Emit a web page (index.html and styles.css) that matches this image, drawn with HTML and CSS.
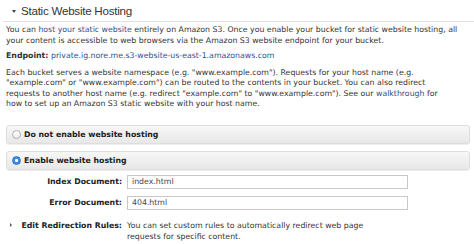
FILE: index.html
```html
<!DOCTYPE html>
<html>
<head>
<meta charset="utf-8">
<link rel="stylesheet" href="styles.css">
</head>
<body>
<div class="panel">
  <div class="header">
    <span class="caret-down"></span>
    <span class="title">Static Website Hosting</span>
  </div>
  <div class="content">
    <p class="para">You can <a class="link" href="#">host your static website</a> entirely on Amazon S3. Once you enable your bucket for static website hosting, all your content is accessible to web browsers via the Amazon S3 website endpoint for your bucket.</p>
    <p class="endpoint"><b>Endpoint:</b> <a class="link" href="#">private.ig.nore.me.s3-website-us-east-1.amazonaws.com</a></p>
    <p class="para">Each bucket serves a website namespace (e.g. "www.example.com"). Requests for your host name (e.g.<br>"example.com" or "www.example.com") can be routed to the contents in your bucket. You can also redirect<br>requests to another host name (e.g. redirect "example.com" to "www.example.com"). See our <a class="link" href="#">walkthrough</a> for<br>how to set up an Amazon S3 static website with your host name.</p>

    <div class="option first">
      <span class="radio"></span>
      <span class="opt-label">Do not enable website hosting</span>
    </div>
    <div class="option">
      <span class="radio checked"></span>
      <span class="opt-label">Enable website hosting</span>
    </div>

    <div class="form">
      <div class="row">
        <span class="label">Index Document:</span>
        <span class="input">index.html</span>
      </div>
      <div class="row">
        <span class="label">Error Document:</span>
        <span class="input">404.html</span>
      </div>
      <div class="row rules">
        <span class="label"><span class="caret-right"></span>Edit Redirection Rules:</span>
        <span class="desc">You can set custom rules to automatically redirect web page requests for specific content.</span>
      </div>
    </div>
  </div>
</div>
</body>
</html>
```
FILE: styles.css
```css
html, body {
  margin: 0;
  padding: 0;
  background: #ffffff;
}
body {
  font-family: "DejaVu Sans", Verdana, sans-serif;
  font-size: 7.8px;
  color: #333;
  width: 474px;
  height: 244px;
  overflow: hidden;
}
.panel {
  padding: 0 4px 0 6px;
}
.header {
  display: flex;
  align-items: center;
  height: 21px;
  border-bottom: 1px solid #e2e2e2;
  margin-left: -3px;
  margin-right: -4px;
  padding-left: 3px;
}
.caret-down {
  width: 0;
  height: 0;
  border-left: 2.5px solid transparent;
  border-right: 2.5px solid transparent;
  border-top: 3px solid #444;
  margin-left: 6px;
  margin-right: 5px;
  margin-top: 1px;
}
.title {
  font-family: "Liberation Sans", Arial, sans-serif;
  font-size: 11.6px;
  letter-spacing: -0.25px;
  color: #333;
}
.content {
  padding-top: 3px;
}
.para {
  margin: 0 0 5px 0;
  line-height: 10.5px;
}
.endpoint {
  margin: 0 0 6px 0;
  line-height: 10.5px;
}
.link {
  color: #2c4f8c;
  text-decoration: none;
}
.option {
  display: flex;
  align-items: center;
  height: 17px;
  margin-top: 7px;
  border: 1px solid #dedede;
  border-radius: 3px;
  background: linear-gradient(#f7f7f7, #e8e8e8);
  box-shadow: 0 1px 0 #eeeeee;
}
.option.first {
  margin-top: 15px;
}
.radio {
  width: 9px;
  height: 9px;
  border-radius: 50%;
  border: 1px solid #b0b0b0;
  background: linear-gradient(#ffffff, #ececec);
  margin-left: 5px;
  margin-right: 3px;
  box-sizing: border-box;
}
.radio.checked {
  border: 1px solid #2f78c8;
  background: radial-gradient(circle, #ffffff 0 1.2px, #3c8de2 1.8px);
}
.opt-label {
  font-weight: bold;
  color: #222;
}
.form {
  margin-top: 5px;
}
.row {
  display: flex;
  align-items: center;
  margin-bottom: 7px;
}
.label {
  width: 116px;
  text-align: right;
  font-weight: bold;
  color: #222;
  margin-right: 5px;
  flex-shrink: 0;
}
.input {
  width: 281px;
  height: 14px;
  border: 1px solid #c8c8c8;
  padding-left: 4px;
  display: flex;
  align-items: center;
  color: #444;
  box-sizing: border-box;
}
.rules {
  align-items: flex-start;
  margin-top: 10px;
}
.rules .label {
  display: flex;
  align-items: center;
  justify-content: flex-end;
  line-height: 11px;
}
.caret-right {
  width: 0;
  height: 0;
  border-top: 2px solid transparent;
  border-bottom: 2px solid transparent;
  border-left: 2.5px solid #555;
  margin-right: 9px;
}
.desc {
  width: 240px;
  line-height: 11.5px;
  color: #333;
}
```
